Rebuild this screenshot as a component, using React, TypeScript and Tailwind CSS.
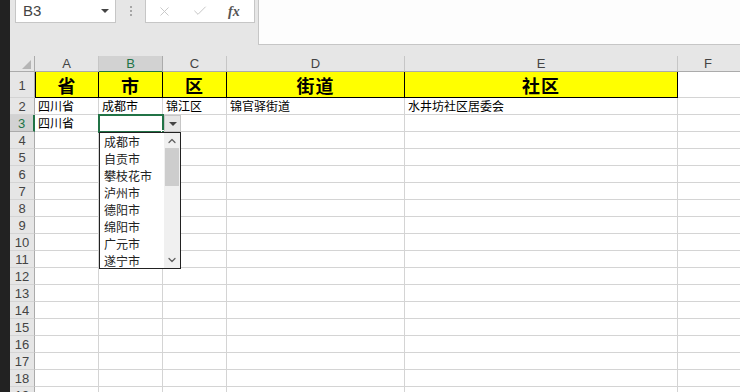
import { ChevronDown, ChevronUp, X, Check } from "lucide-react";

const cols = [
  { key: "A", w: "w-[64px]" },
  { key: "B", w: "w-[64px]" },
  { key: "C", w: "w-[64px]" },
  { key: "D", w: "w-[178px]" },
  { key: "E", w: "w-[273px]" },
];

const headers = ["省", "市", "区", "街道", "社区"];
const row2 = ["四川省", "成都市", "锦江区", "锦官驿街道", "水井坊社区居委会"];
const cities = ["成都市", "自贡市", "攀枝花市", "泸州市", "德阳市", "绵阳市", "广元市", "遂宁市"];

const rowNums = Array.from({ length: 18 }, (_, i) => i + 2);

function Tri() {
  return <div className="w-0 h-0 border-l-[4px] border-r-[4px] border-t-[4px] border-l-transparent border-r-transparent border-t-[#444]" />;
}

export default function App() {
  return (
    <div className="flex w-[740px] h-[392px] overflow-hidden bg-white font-['Liberation_Sans','Noto_Sans_CJK_SC',sans-serif]">
      <div className="w-[10px] h-full bg-[#222]" />
      <div className="flex-1 flex flex-col min-w-0">
        {/* formula bar */}
        <div className="h-[56px] bg-[#e6e6e6] flex items-start pl-[5px] shrink-0">
          <div className="w-[101px] h-[23px] bg-white border-x border-b border-[#c6c6c6] flex items-center justify-between pl-[7px] pr-[6px]">
            <span className="text-[15px] text-[#444]">B3</span>
            <Tri />
          </div>
          <div className="ml-[14px] mt-[6px] flex flex-col gap-[2px]">
            <div className="w-[2px] h-[2px] bg-[#a6a6a6]" />
            <div className="w-[2px] h-[2px] bg-[#a6a6a6]" />
            <div className="w-[2px] h-[2px] bg-[#a6a6a6]" />
          </div>
          <div className="ml-[13px] w-[110px] h-[23px] bg-white border-x border-b border-[#c6c6c6] flex items-center">
            <X size={15} strokeWidth={1.5} className="ml-[11px] text-[#c6c6c6]" />
            <Check size={16} strokeWidth={1.5} className="ml-[20px] text-[#c6c6c6]" />
            <span className="ml-[20px] text-[14px] italic font-bold font-['Liberation_Serif',serif] text-[#555]">fx</span>
          </div>
          <div className="ml-[3px] flex-1 h-[45px] bg-[#fdfdfd] border-l border-b border-[#c6c6c6]" />
        </div>

        {/* grid */}
        <div className="relative flex-1">
          {/* column headers */}
          <div className="flex h-[16px] bg-[#e6e6e6] border-b border-[#ababab]">
            <div className="w-[25px] h-full border-r border-[#ababab] relative">
              <div className="absolute right-[3px] bottom-[2px] w-0 h-0 border-l-[9px] border-b-[9px] border-l-transparent border-b-[#b5b5b5]" />
            </div>
            {cols.map((c) =>
              c.key === "B" ? (
                <div key={c.key} className={`${c.w} h-[17px] bg-[#d2d2d2] border-r border-[#ababab] border-b-2 border-b-[#217346] flex items-center justify-center text-[13px] text-[#217346]`}>
                  {c.key}
                </div>
              ) : (
                <div key={c.key} className={`${c.w} h-full border-r border-[#c6c6c6] flex items-center justify-center text-[13px] text-[#444]`}>
                  {c.key}
                </div>
              )
            )}
            <div className="flex-1 h-full flex items-center justify-center text-[13px] text-[#444] pr-[2px]">F</div>
          </div>

          {/* row 1 */}
          <div className="flex h-[26px]">
            <div className="w-[25px] h-full bg-[#e6e6e6] border-r border-b border-[#ababab] border-b-[#d4d4d4] flex items-end justify-center pb-[2px] text-[13px] text-[#444]">1</div>
            {cols.map((c, i) => (
              <div key={c.key} className={`${c.w} h-full bg-[#ffff00] border-r border-b border-black ${i === 0 ? "border-l" : ""} flex items-end justify-center text-[18px] leading-[24px] font-bold text-black font-['Noto_Sans_CJK_SC',serif] tracking-[1px]`}>
                {headers[i]}
              </div>
            ))}
            <div className="flex-1 h-full border-b border-[#d4d4d4]" />
          </div>

          {/* row 2+ */}
          {rowNums.map((n) => (
            <div key={n} className="flex h-[17px]">
              {n === 3 ? (
                <div className="w-[25px] h-full bg-[#d2d2d2] border-r-2 border-r-[#217346] border-b border-b-[#ababab] flex items-center justify-center pt-[1px] text-[13px] text-[#217346]">{n}</div>
              ) : (
                <div className="w-[25px] h-full bg-[#e6e6e6] border-r border-b border-r-[#ababab] border-b-[#d4d4d4] flex items-center justify-center pt-[1px] text-[13px] text-[#444]">{n}</div>
              )}
              {cols.map((c, i) => (
                <div key={c.key} className={`${c.w} h-full border-r border-b border-[#d4d4d4] flex items-center pl-[3px] pt-[2px] text-[12px] text-black overflow-hidden whitespace-nowrap`}>
                  {n === 2 ? row2[i] : n === 3 && i === 0 ? "四川省" : ""}
                </div>
              ))}
              <div className="flex-1 h-full border-b border-[#d4d4d4]" />
            </div>
          ))}

          {/* selected cell B3 */}
          <div className="absolute left-[88px] top-[58px] w-[66px] h-[19px] border-2 border-[#217346]">
            <div className="absolute -right-[4px] -bottom-[4px] w-[5px] h-[5px] bg-[#217346] border border-white" />
          </div>
          <div className="absolute left-[154px] top-[59px] w-[17px] h-[17px] bg-[#e6e6e6] border border-[#c6c6c6] flex items-center justify-center">
            <Tri />
          </div>

          {/* dropdown list */}
          <div className="absolute left-[89px] top-[76px] w-[82px] h-[137px] bg-white border border-[#222] flex">
            <div className="flex-1 pt-[1px]">
              {cities.map((c) => (
                <div key={c} className="h-[17px] flex items-center pl-[4px] text-[12px] text-[#222] whitespace-nowrap">
                  {c}
                </div>
              ))}
            </div>
            <div className="w-[16px] h-full bg-[#f0f0f0] flex flex-col items-center">
              <ChevronUp size={12} strokeWidth={2.5} className="mt-[2px] text-[#606060]" />
              <div className="w-[14px] h-[38px] bg-[#cdcdcd] mt-[1px]" />
              <div className="flex-1" />
              <ChevronDown size={12} strokeWidth={2.5} className="mb-[2px] text-[#606060]" />
            </div>
          </div>
        </div>
      </div>
    </div>
  );
}
